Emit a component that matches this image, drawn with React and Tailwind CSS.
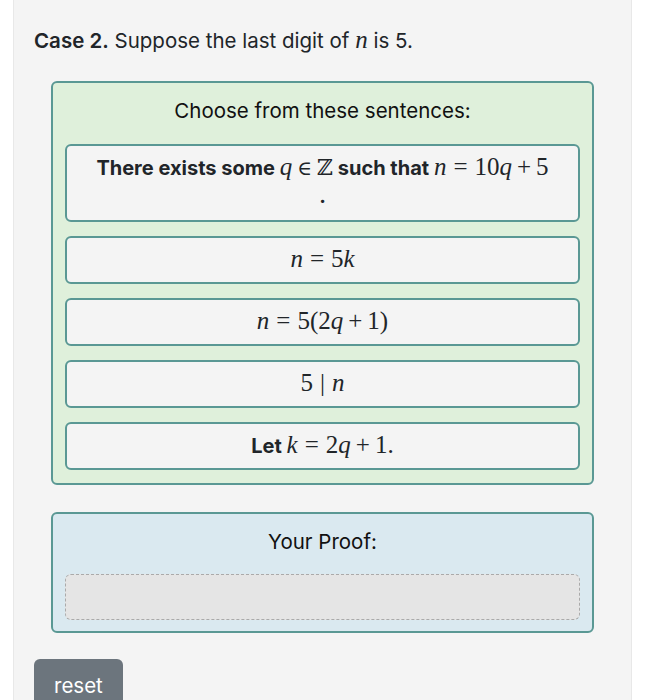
import React from 'react'

const sans = { fontFamily: 'Inter, "Liberation Sans", sans-serif' }

function M({ children }) {
  // KaTeX-like math run
  return <span className="font-['Liberation_Serif',serif] text-[25px] font-normal leading-none">{children}</span>
}

function V({ children }) {
  return <i className="italic">{children}</i>
}

function Op({ children }) {
  return <span className="mx-[7px]">{children}</span>
}

function Bin({ children }) {
  return <span className="mx-[5px]">{children}</span>
}

function Card({ children, tall }) {
  return (
    <div
      className={`rounded-md border-2 border-[#5a9894] bg-[#f4f4f4] px-3 pt-2 text-center text-[20px] leading-[28px] text-[#212529] ${
        tall ? 'pb-[10px]' : 'pb-2'
      }`}
    >
      {children}
    </div>
  )
}

export default function App() {
  const sentences = [
    (
      <span className="font-bold">
        There exists some{' '}
        <M>
          <V>q</V>
          <Bin><span className="font-['DejaVu_Serif',serif] text-[20px]">∈</span></Bin>
          <span className="font-['DejaVu_Serif',serif] text-[22px]">ℤ</span>
        </M>{' '}
        such that{' '}
        <M>
          <V>n</V>
          <Op>=</Op>10<V>q</V>
          <Bin>+</Bin>5
        </M>
        <br />.
      </span>
    ),
    <M><V>n</V><Op>=</Op>5<V>k</V></M>,
    <M><V>n</V><Op>=</Op>5(2<V>q</V><Bin>+</Bin>1)</M>,
    <M>5<Op>|</Op><V>n</V></M>,
    (
      <span className="font-bold">
        Let <M><V>k</V><Op>=</Op>2<V>q</V><Bin>+</Bin>1.</M>
      </span>
    ),
  ]

  return (
    <div className="min-h-[700px] bg-white" style={sans}>
      <div className="mx-[13px] h-[700px] overflow-hidden border-x border-[#e8e8e8] bg-[#f4f4f4] px-5 pt-[27px]">
        <p className="text-[20.5px] leading-[28px] text-[#212529]">
          <span className="font-semibold">Case 2.</span> Suppose the last digit of <M><V>n</V></M> is 5.
        </p>

        {/* Choices */}
        <div className="mx-[17px] mt-[26px] rounded-md border-2 border-[#5a9894] bg-[#dff0db] px-3 pb-[13px] pt-[14px]">
          <p className="text-center text-[20.5px] leading-[28px] text-[#111]">Choose from these sentences:</p>
          <div className="mt-[19px] flex flex-col gap-[14px]">
            {sentences.map((s, i) => (
              <Card key={i} tall={i === 0}>{s}</Card>
            ))}
          </div>
        </div>

        {/* Proof area */}
        <div className="mx-[17px] mt-[27px] rounded-md border-2 border-[#5a9894] bg-[#dae9f0] px-3 pb-[11px] pt-[14px]">
          <p className="text-center text-[20.5px] leading-[28px] text-[#111]">Your Proof:</p>
          <div className="mt-[18px] h-[46px] rounded-md border-[1.5px] border-dashed border-[#aaaaaa] bg-[#e5e5e5]"></div>
        </div>

        <button className="mt-[26px] rounded-t-md bg-[#6c757d] px-5 pb-3 pt-[13px] text-[20.5px] leading-[28px] text-white">
          reset
        </button>
      </div>
    </div>
  )
}
